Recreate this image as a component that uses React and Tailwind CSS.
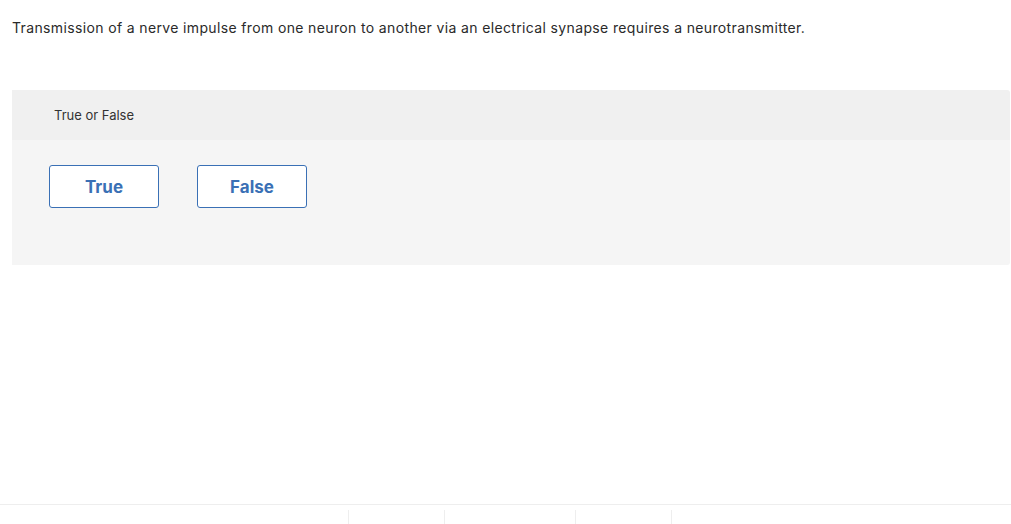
export default function App() {
  return (
    <div className="w-[1011px] h-[524px] bg-white flex flex-col overflow-hidden" style={{ fontFamily: 'Inter, "Open Sans", sans-serif' }}>
      <p className="pl-[12px] pt-[18px] text-[14px] leading-[20px] tracking-[0.36px] text-[#2a2a2a]">
        Transmission of a nerve impulse from one neuron to another via an electrical synapse requires a neurotransmitter.
      </p>
      <div className="ml-[12px] mr-[1px] mt-[52px] rounded-tr-[3px] rounded-br-[3px] overflow-hidden">
        <div className="h-[50px] bg-[#f0f0f0] flex items-center pl-[42px] pt-[1px] text-[13px] text-[#333]">True or False</div>
        <div className="h-[125px] bg-[#f5f5f5] flex items-start gap-[38px] pl-[37px] pt-[25px]">
          <button className="w-[110px] h-[43px] border border-[#3a70b5] rounded-[3px] bg-white text-[#3a70b5] font-bold text-[17px] pt-[2px]">True</button>
          <button className="w-[110px] h-[43px] border border-[#3a70b5] rounded-[3px] bg-white text-[#3a70b5] font-bold text-[17px] pt-[2px]">False</button>
        </div>
      </div>
      <div className="mt-auto h-[20px] border-t border-[#eeeeee] flex pt-[5px]">
        <div className="w-[348px]" />
        <div className="w-[96px] border-l border-[#eeeeee]" />
        <div className="w-[131px] border-l border-[#eeeeee]" />
        <div className="w-[96px] border-l border-[#eeeeee]" />
        <div className="border-l border-[#eeeeee]" />
      </div>
    </div>
  );
}
